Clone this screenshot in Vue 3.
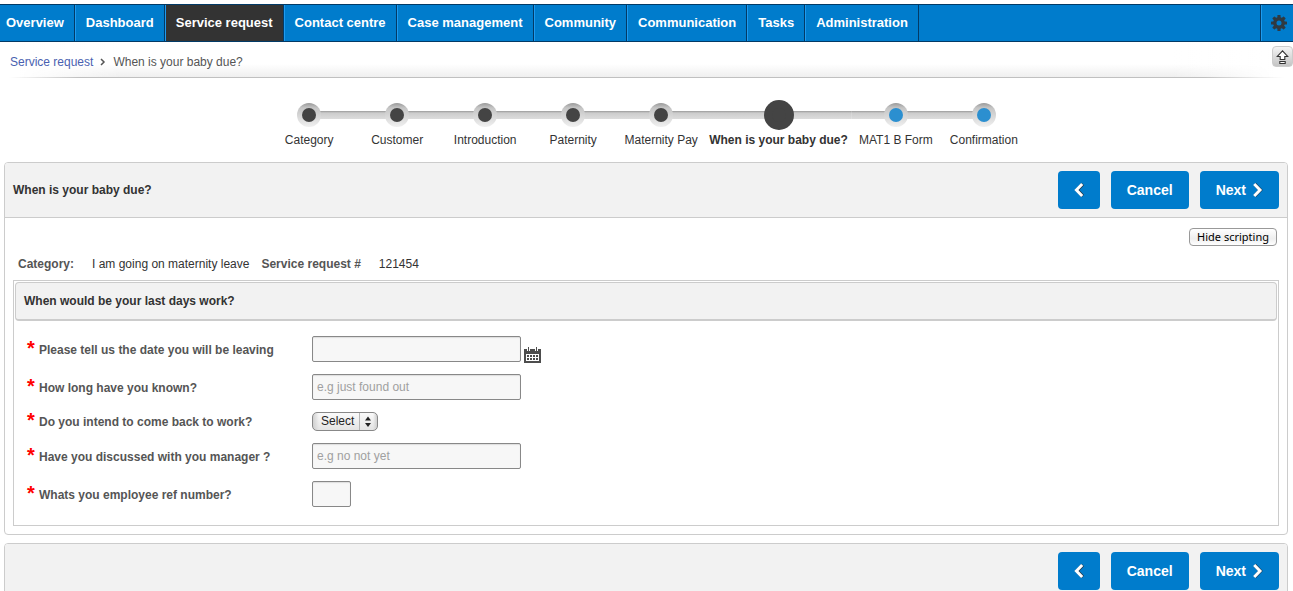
<script setup>
import { ref } from 'vue'

const tabs = ['Overview', 'Dashboard', 'Service request', 'Contact centre', 'Case management', 'Community', 'Communication', 'Tasks', 'Administration']
const activeTab = ref('Service request')

const steps = [
  { label: 'Category', state: 'done' },
  { label: 'Customer', state: 'done' },
  { label: 'Introduction', state: 'done' },
  { label: 'Paternity', state: 'done' },
  { label: 'Maternity Pay', state: 'done' },
  { label: 'When is your baby due?', state: 'current' },
  { label: 'MAT1 B Form', state: 'todo' },
  { label: 'Confirmation', state: 'todo' }
]

const fields = [
  { id: 'leaving', label: 'Please tell us the date you will be leaving', type: 'date' },
  { id: 'known', label: 'How long have you known?', type: 'text', placeholder: 'e.g just found out' },
  { id: 'return', label: 'Do you intend to come back to work?', type: 'select' },
  { id: 'manager', label: 'Have you discussed with you manager ?', type: 'text', placeholder: 'e.g no not yet' },
  { id: 'ref', label: 'Whats you employee ref number?', type: 'short' }
]

const gearTeeth = [0, 45, 90, 135, 180, 225, 270, 315]
</script>

<template>
  <div class="page">
    <nav class="nav">
      <a v-for="t in tabs" :key="t" href="#" class="tab" :class="{ active: t === activeTab }" @click.prevent="activeTab = t">{{ t }}</a>
      <span class="spacer"></span>
      <button type="button" class="gear" aria-label="Settings">
        <svg width="16" height="16" viewBox="0 0 16 16">
          <g fill="#2f3a42">
            <rect v-for="a in gearTeeth" :key="a" x="6.4" y="0" width="3.2" height="4" rx=".6" :transform="`rotate(${a} 8 8)`" />
          </g>
          <circle cx="8" cy="8" r="4.2" fill="none" stroke="#2f3a42" stroke-width="3.4" />
        </svg>
      </button>
    </nav>

    <div class="crumbbar">
      <div class="crumbs">
        <a href="#">Service request</a>
        <svg width="6" height="8" viewBox="0 0 6 8"><path d="M1 1l3 3-3 3" fill="none" stroke="#555" stroke-width="1.5" /></svg>
        <span>When is your baby due?</span>
      </div>
      <button type="button" class="up" aria-label="Scroll to top">
        <svg width="15" height="16" viewBox="0 0 15 16" fill="#fff" stroke="#333" stroke-width="1.1">
          <path d="M7.5 1.8L2.3 7.5h2.9v3h4.6v-3h2.9z" />
          <path d="M4.8 12.5h5.4v2H4.8z" />
        </svg>
      </button>
    </div>

    <ol class="steps">
      <li v-for="s in steps" :key="s.label" :class="s.state">
        <span class="track"><span class="ring"><span class="dot"></span></span></span>
        <span class="step-label">{{ s.label }}</span>
      </li>
    </ol>

    <main class="panel">
      <header class="bar">
        <h1>When is your baby due?</h1>
        <div class="actions">
          <button type="button" class="btn back" aria-label="Back">
            <svg width="10" height="16" viewBox="0 0 10 16"><path d="M8.8 2L3 8l5.8 6" fill="none" stroke="#234" stroke-width="3.4" /><path d="M8.2 2L2.4 8l5.8 6" fill="none" stroke="#fff" stroke-width="3" /></svg>
          </button>
          <button type="button" class="btn">Cancel</button>
          <button type="button" class="btn next">Next
            <svg width="11" height="16" viewBox="0 0 11 16"><path d="M2.6 2l5.8 6-5.8 6" fill="none" stroke="#234" stroke-width="3.4" /><path d="M2.2 2L8 8l-5.8 6" fill="none" stroke="#fff" stroke-width="3" /></svg>
          </button>
        </div>
      </header>

      <div class="body">
        <div class="tools"><button type="button" class="hide">Hide scripting</button></div>
        <dl class="meta">
          <dt>Category:</dt><dd>I am going on maternity leave</dd>
          <dt>Service request #</dt><dd>121454</dd>
        </dl>

        <section class="group">
          <h2>When would be your last days work?</h2>
          <form class="form" @submit.prevent>
            <div v-for="f in fields" :key="f.id" class="row">
              <label :for="f.id"><span class="req">*</span>{{ f.label }}</label>
              <span v-if="f.type === 'select'" class="select">
                <select :id="f.id"><option>Select</option><option>Yes</option><option>No</option></select>
                <svg width="18" height="17" viewBox="0 0 18 17">
                  <path d="M.5 0v17" stroke="#b5b5b5" />
                  <path d="M6 7.5L9 3.5l3 4zM6 10l3 4 3-4z" fill="#222" />
                </svg>
              </span>
              <input v-else :id="f.id" type="text" :class="{ short: f.type === 'short' }" :placeholder="f.placeholder" />
              <button v-if="f.type === 'date'" type="button" class="cal" aria-label="Choose date">
                <svg width="17" height="16" viewBox="0 0 17 16">
                  <path d="M0 2h17v14H0z" fill="#4d4d4d" />
                  <path d="M3 0h3v4H3zM11 0h3v4h-3z" fill="#fff" />
                  <path d="M4 0h1v4H4zM12 0h1v4h-1z" fill="#4d4d4d" />
                  <path d="M2 7h13v7H2z" fill="#fff" />
                  <path d="M3 8h2v2H3zM6 8h2v2H6zM9 8h2v2H9zM12 8h2v2h-2zM3 11h2v2H3zM6 11h2v2H6zM9 11h2v2H9zM12 11h2v2h-2z" fill="#4d4d4d" />
                </svg>
              </button>
            </div>
          </form>
        </section>
      </div>
    </main>

    <footer class="panel">
      <div class="bar">
        <span></span>
        <div class="actions">
          <button type="button" class="btn back" aria-label="Back">
            <svg width="10" height="16" viewBox="0 0 10 16"><path d="M8.8 2L3 8l5.8 6" fill="none" stroke="#234" stroke-width="3.4" /><path d="M8.2 2L2.4 8l5.8 6" fill="none" stroke="#fff" stroke-width="3" /></svg>
          </button>
          <button type="button" class="btn">Cancel</button>
          <button type="button" class="btn next">Next
            <svg width="11" height="16" viewBox="0 0 11 16"><path d="M2.6 2l5.8 6-5.8 6" fill="none" stroke="#234" stroke-width="3.4" /><path d="M2.2 2L8 8l-5.8 6" fill="none" stroke="#fff" stroke-width="3" /></svg>
          </button>
        </div>
      </div>
    </footer>
  </div>
</template>

<style>
html { scrollbar-width: none; background: #fff; }
</style>

<style scoped>
.page { padding-top: 4px; font: 12px/16px "Liberation Sans", Arial, sans-serif; color: #333; }
.page *, .page { box-sizing: border-box; }
button, input, select { font-family: inherit; margin: 0; }
svg { display: block; flex: none; }

.nav { display: flex; height: 38px; background: #007ccc; border: solid #023a66; border-width: 1px 0; }
.tab { padding: 10px 10px 0; border-left: 1px solid #1e9bf0; border-right: 1px solid #023a66; color: #fff; font-size: 13px; font-weight: bold; line-height: 16px; text-decoration: none; white-space: nowrap; }
.tab:first-child { border-left: 0; padding-left: 6px; }
.tab.active { background: #333; }
.spacer { flex: 1; border-right: 1px solid #023a66; }
.gear { width: 32px; padding: 0 0 0 2px; border: 0; border-left: 1px solid #1e9bf0; background: none; display: flex; align-items: center; justify-content: center; }

.crumbbar { display: flex; justify-content: space-between; align-items: flex-start; height: 36px; border-bottom: 1px solid; border-image: linear-gradient(90deg, transparent 10px, #c0c0c0 80px, #c0c0c0 calc(100% - 90px), transparent calc(100% - 10px)) 1; background: linear-gradient(90deg, #fff 20px, transparent 120px, transparent calc(100% - 120px), #fff calc(100% - 20px)), linear-gradient(#fff 22px, #efefef 35px); }
.crumbs { display: flex; align-items: center; gap: 7px; padding: 12px 0 0 10px; color: #555; }
.crumbs a { color: #4a5fb0; text-decoration: none; }
.up { display: flex; align-items: center; justify-content: center; width: 21px; height: 21px; margin-top: 4px; padding: 0; border: 1px solid #ccc; border-radius: 4px; background: linear-gradient(#f4f4f4, #c4c4c4); }

.steps { display: flex; justify-content: center; list-style: none; margin: 0; padding: 22px 0 14px; }
.steps li { min-width: 88px; display: flex; flex-direction: column; text-align: center; white-space: nowrap; }
.steps li.current { font-weight: bold; }
.current .step-label { padding: 0 4px; }
.track { display: flex; align-items: center; justify-content: center; height: 30px; margin-bottom: 2px; background: linear-gradient(#999, #ccc 2px, #dcdcdc) center / 100% 8px no-repeat; }
.steps li:first-child .track { background-size: 50% 8px; background-position: right center; }
.steps li:last-child .track { background-size: 50% 8px; background-position: left center; }
.ring { display: flex; align-items: center; justify-content: center; width: 24px; height: 24px; border-radius: 50%; background: linear-gradient(#999, #c4c4c4 20%, #f0f0f0); }
.dot { width: 14px; height: 14px; border-radius: 50%; background: #444; }
.todo .dot { background: #2b8fd0; }
.current .ring { width: 30px; height: 30px; background: #444; }

.panel { margin: 0 5px 8px 4px; border: 1px solid #ccc; border-radius: 4px; }
.bar { display: flex; align-items: center; justify-content: space-between; padding: 8px; background: #f2f2f2; border-bottom: 1px solid #ccc; border-radius: 3px 3px 0 0; }
h1, h2 { margin: 0; font-size: 12px; line-height: 16px; }
.actions { display: flex; gap: 11px; }
.btn { display: flex; align-items: center; gap: 6px; height: 38px; padding: 0 16px; border: 0; border-radius: 4px; background: #007ccc; color: #fff; font-size: 14px; font-weight: bold; }

.body { padding: 10px 8px 8px; }
.tools { display: flex; justify-content: flex-end; padding-right: 2px; }
.hide { height: 18px; padding: 0 7px; border: 1px solid #999; border-radius: 4px; background: linear-gradient(#fff, #eee 60%, #fff); color: #000; font: 11px/16px "Noto Sans", sans-serif; }
.meta { display: flex; margin: 10px 0 8px 5px; }
.meta dt { font-weight: bold; color: #555; margin-right: 18px; }
.meta dd { margin: 0 12px 0 0; }
.group { border: 1px solid #ccc; padding: 1px; }
h2 { padding: 10px 8px; border: 1px solid #ccc; border-bottom-width: 2px; border-radius: 4px; background: #f2f2f2; }
.form { display: flex; flex-direction: column; gap: 12px; padding: 15px 12px 17px; }
.row { display: flex; align-items: center; }
.row label { display: flex; align-items: center; width: 285px; padding-top: 1px; font-weight: bold; color: #555; }
.req { width: 12px; height: 16px; color: #f00; font: bold 20px/12px "Liberation Sans", Arial, sans-serif; }
.row input { width: 209px; height: 26px; padding: 0 4px; border: 1px solid #888; border-radius: 2px; background: #f7f7f7; font-size: 12px; color: #333; box-shadow: inset 0 1px 1px #ddd; }
.row input.short { width: 39px; }
.row input::placeholder { color: #a0a0a0; opacity: 1; }
.cal { align-self: flex-end; height: 16px; margin: 0 0 -1px 3px; padding: 0; border: 0; background: none; }
.select { position: relative; }
.select select { display: block; appearance: none; width: 66px; height: 19px; padding: 0 0 1px 8px; border: 1px solid #888; border-radius: 5px; background: linear-gradient(90deg, #d0d0d0, transparent 6px, transparent 60px, #d0d0d0), linear-gradient(#fafafa, #e4e4e4); color: #222; font-size: 12px; line-height: 16px; }
.select svg { position: absolute; top: 1px; right: 1px; pointer-events: none; }
</style>
